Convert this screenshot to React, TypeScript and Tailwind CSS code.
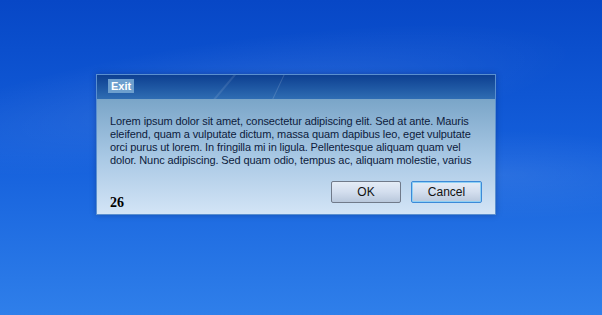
export default function App() {
  return (
    <div className="relative h-[315px] w-[602px] overflow-hidden bg-gradient-to-b from-[#0747c6] via-[#1560dc] to-[#2f7fea] pl-[96px] pt-[74px]">
      {/* desktop swoosh */}
      <div className="pointer-events-none absolute -left-[120px] top-[40px] h-[120px] w-[700px] -rotate-[8deg] rounded-[50%] bg-[radial-gradient(ellipse_at_center,rgba(255,255,255,0.10),transparent_70%)]" />
      <div className="pointer-events-none absolute left-[300px] top-[130px] h-[90px] w-[400px] rounded-[50%] bg-[radial-gradient(ellipse_at_center,rgba(255,255,255,0.08),transparent_70%)]" />

      <div className="relative flex h-[141px] w-[400px] flex-col border border-[#5a8fcf] font-['Liberation_Sans',sans-serif] shadow-[0_0_6px_rgba(0,0,40,0.25)]">
        {/* header */}
        <div className="relative flex h-[24px] shrink-0 items-start overflow-hidden bg-gradient-to-b from-[#0d3f91] to-[#2f6db3] pl-[11px] pt-[4px]">
          <div className="absolute left-[125px] top-[-6px] h-[40px] w-[2px] rotate-[40deg] bg-white/10" />
          <div className="absolute left-[180px] top-[-6px] h-[40px] w-[1px] rotate-[25deg] bg-white/15" />
          <span className="relative bg-[#6d9fce] px-[3px] text-[11px] font-bold leading-[14px] text-white">
            Exit
          </span>
        </div>

        {/* body */}
        <div className="flex flex-1 flex-col bg-gradient-to-b from-[#7aa5c8] via-[#a8c8e4] to-[#d3e4f6] px-[13px] pt-[16px]">
          <p className="whitespace-nowrap text-[11px] leading-[13px] tracking-[-0.1px] text-[#0d1b3c]">
            Lorem ipsum dolor sit amet, consectetur adipiscing elit. Sed at ante. Mauris
            <br />
            eleifend, quam a vulputate dictum, massa quam dapibus leo, eget vulputate
            <br />
            orci purus ut lorem. In fringilla mi in ligula. Pellentesque aliquam quam vel
            <br />
            dolor. Nunc adipiscing. Sed quam odio, tempus ac, aliquam molestie, varius
          </p>
          <div className="mt-[14px] flex items-start justify-between">
            <span className="mt-[14px] font-['Liberation_Serif',serif] text-[14px] font-bold leading-[16px] text-black">
              26
            </span>
            <div className="flex gap-[10px]">
              <button className="h-[22px] w-[70px] rounded-[2px] border border-[#707a8a] bg-gradient-to-b from-[#e4ecf6] via-[#d3deee] to-[#b9c8dc] text-[12px] leading-none text-[#111]">
                OK
              </button>
              <button className="h-[22px] w-[71px] rounded-[2px] border border-[#3c8ad8] bg-gradient-to-b from-[#e4ecf6] via-[#d3deee] to-[#b9c8dc] text-[12px] leading-none text-[#111] shadow-[inset_0_0_0_1px_#8fd0f4]">
                Cancel
              </button>
            </div>
          </div>
        </div>
      </div>
    </div>
  );
}
